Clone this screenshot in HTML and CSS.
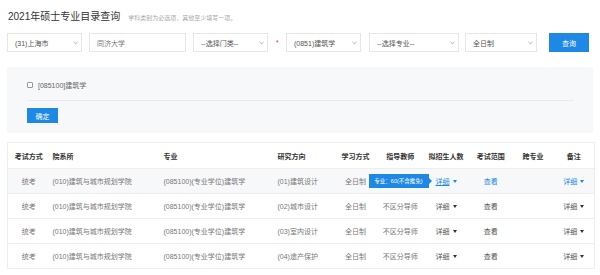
FILE: index.html
```html
<!DOCTYPE html>
<html lang="zh-CN">
<head>
<meta charset="utf-8">
<title>2021年硕士专业目录查询</title>
<link rel="stylesheet" href="styles.css">
</head>
<body>
<div class="page">
  <div class="heading">
    <h1 class="title">2021年硕士专业目录查询</h1>
    <span class="hint">学科类别为必选项，其他至少填写一项。</span>
  </div>

  <div class="filters">
    <div class="select w75"><span>(31)上海市</span><svg class="chev" viewBox="0 0 6 4"><path d="M0.5 0.5 L3 3 L5.5 0.5" fill="none" stroke="#888" stroke-width="0.8"/></svg></div>
    <div class="input w97"><span>同济大学</span></div>
    <div class="select w75"><span>--选择门类--</span><svg class="chev" viewBox="0 0 6 4"><path d="M0.5 0.5 L3 3 L5.5 0.5" fill="none" stroke="#888" stroke-width="0.8"/></svg></div>
    <span class="star">*</span>
    <div class="select w75 tight"><span>(0851)建筑学</span><svg class="chev" viewBox="0 0 6 4"><path d="M0.5 0.5 L3 3 L5.5 0.5" fill="none" stroke="#888" stroke-width="0.8"/></svg></div>
    <div class="select w90"><span>--选择专业--</span><svg class="chev" viewBox="0 0 6 4"><path d="M0.5 0.5 L3 3 L5.5 0.5" fill="none" stroke="#888" stroke-width="0.8"/></svg></div>
    <div class="select w72 narrow"><span>全日制</span><svg class="chev" viewBox="0 0 6 4"><path d="M0.5 0.5 L3 3 L5.5 0.5" fill="none" stroke="#888" stroke-width="0.8"/></svg></div>
    <button class="btn btn-search">查询</button>
  </div>

  <div class="panel">
    <label class="check-row"><span class="box"></span>[085100]建筑学</label>
    <button class="btn btn-ok">确定</button>
  </div>

  <table class="grid">
    <colgroup>
      <col style="width:42px"><col style="width:111px"><col style="width:114px"><col style="width:59px"><col style="width:44px"><col style="width:45.5px"><col style="width:46px"><col style="width:43.5px"><col style="width:41px"><col style="width:41px">
    </colgroup>
    <thead>
      <tr>
        <th class="c">考试方式</th><th>院系所</th><th>专业</th><th>研究方向</th><th class="c">学习方式</th><th class="c">指导教师</th><th class="c">拟招生人数</th><th class="c">考试范围</th><th class="c">跨专业</th><th class="c">备注</th>
      </tr>
    </thead>
    <tbody>
      <tr class="active">
        <td class="c">统考</td><td>(010)建筑与城市规划学院</td><td>(085100)(专业学位)建筑学</td><td>(01)建筑设计</td><td class="c">全日制</td><td class="c">不区分导师</td>
        <td class="c"><span class="tip-anchor"><span class="tooltip">专业：60(不含推免)</span><a class="link on">详细<i class="caret"></i></a></span></td>
        <td class="c"><a class="link blue">查看</a></td><td></td><td class="c"><a class="link blue">详细<i class="caret"></i></a></td>
      </tr>
      <tr>
        <td class="c">统考</td><td>(010)建筑与城市规划学院</td><td>(085100)(专业学位)建筑学</td><td>(02)城市设计</td><td class="c">全日制</td><td class="c">不区分导师</td>
        <td class="c"><a class="link">详细<i class="caret"></i></a></td><td class="c"><a class="link">查看</a></td><td></td><td class="c"><a class="link">详细<i class="caret"></i></a></td>
      </tr>
      <tr>
        <td class="c">统考</td><td>(010)建筑与城市规划学院</td><td>(085100)(专业学位)建筑学</td><td>(03)室内设计</td><td class="c">全日制</td><td class="c">不区分导师</td>
        <td class="c"><a class="link">详细<i class="caret"></i></a></td><td class="c"><a class="link">查看</a></td><td></td><td class="c"><a class="link">详细<i class="caret"></i></a></td>
      </tr>
      <tr>
        <td class="c">统考</td><td>(010)建筑与城市规划学院</td><td>(085100)(专业学位)建筑学</td><td>(04)遗产保护</td><td class="c">全日制</td><td class="c">不区分导师</td>
        <td class="c"><a class="link">详细<i class="caret"></i></a></td><td class="c"><a class="link">查看</a></td><td></td><td class="c"><a class="link">详细<i class="caret"></i></a></td>
      </tr>
    </tbody>
  </table>
</div>
</body>
</html>
```

FILE: styles.css
```css
* { box-sizing: border-box; }
html, body { margin: 0; padding: 0; background: #fff; }
body {
  font-family: "Liberation Sans", "Noto Sans CJK SC", sans-serif;
  color: #333;
}
.page { padding: 10px 6px 0 7px; width: 600px; }

.heading { display: flex; align-items: baseline; height: 14px; }
.title { margin: 0 0 0 1px; font-size: 10px; line-height: 14px; font-weight: normal; color: #333; }
.hint { margin-left: 8px; font-size: 6px; color: #aaa; }

.filters { display: flex; align-items: center; margin-top: 9px; height: 19px; }
.select, .input {
  height: 19px;
  border: 1px solid #e6e6e6;
  background: #fff;
  display: flex;
  align-items: center;
  justify-content: space-between;
  padding: 0 3px 0 7px;
  font-size: 7px;
  color: #555;
  margin-right: 7px;
}
.input { color: #777; }
.chev { width: 5px; height: 4px; }
.w75 { width: 75px; }
.w97 { width: 97px; }
.w90 { width: 90px; margin-right: 6px; }
.w72 { width: 72px; margin-right: 12px; }
.star { color: #e33; font-size: 7px; width: 5px; margin-left: 1px; margin-right: 5px; }
.tight { margin-right: 8px; }

.btn {
  border: 0;
  background: #1e88e5;
  color: #fff;
  font-family: inherit;
  font-size: 7px;
  padding: 0;
  cursor: pointer;
}
.btn-search { width: 40px; height: 19px; }

.panel {
  margin-top: 15px;
  width: 586px;
  height: 66px;
  background: #f7f8fa;
  padding: 12px 19px 0 20px;
}
.check-row {
  display: flex;
  align-items: center;
  height: 12px;
  font-size: 7px;
  color: #666;
  padding-bottom: 0;
  box-sizing: content-box;
  border-bottom: 1px solid #e8eaee;
  padding-bottom: 9px;
}
.box {
  width: 6px; height: 6px;
  border: 1px solid #999;
  border-radius: 1px;
  background: #fff;
  margin-right: 5px;
}
.btn-ok { display: block; margin-top: 7px; width: 31px; height: 15px; }

.grid {
  margin-top: 9px;
  width: 587px;
  table-layout: fixed;
  border-collapse: collapse;
  border: 1px solid #eeeeee;
  font-size: 7px;
}
.grid th, .grid td {
  text-align: left;
  padding: 0 3px;
  white-space: nowrap;
  border-bottom: 1px solid #eeeeee;
}
.grid th { height: 26px; font-weight: bold; color: #333; }
.grid td { height: 25px; color: #777; }
.grid .c { text-align: center; }
.grid tr.active td { background: #f7f8fa; }

.link { color: #555; text-decoration: none; }
.link.blue { color: #1e88e5; }
.link.on { color: #1e88e5; text-decoration: underline; }
.caret {
  display: inline-block;
  width: 0; height: 0;
  margin-left: 3px;
  vertical-align: 1px;
  border-left: 2.5px solid transparent;
  border-right: 2.5px solid transparent;
  border-top: 3px solid currentColor;
}
.link:not(.blue):not(.on) .caret { border-top-color: #333; }

.tip-anchor { position: relative; display: inline-block; }
.tooltip {
  position: absolute;
  right: calc(100% + 7px);
  top: 50%;
  transform: translateY(-50%);
  height: 14px;
  width: 60px;
  background: #1e88e5;
  color: #fff;
  font-size: 5.5px;
  line-height: 14px;
  text-align: center;
  white-space: nowrap;
}
.tooltip::after {
  content: "";
  position: absolute;
  left: 100%;
  top: 50%;
  margin-top: -3px;
  border-top: 3px solid transparent;
  border-bottom: 3px solid transparent;
  border-left: 3px solid #1e88e5;
}
```
